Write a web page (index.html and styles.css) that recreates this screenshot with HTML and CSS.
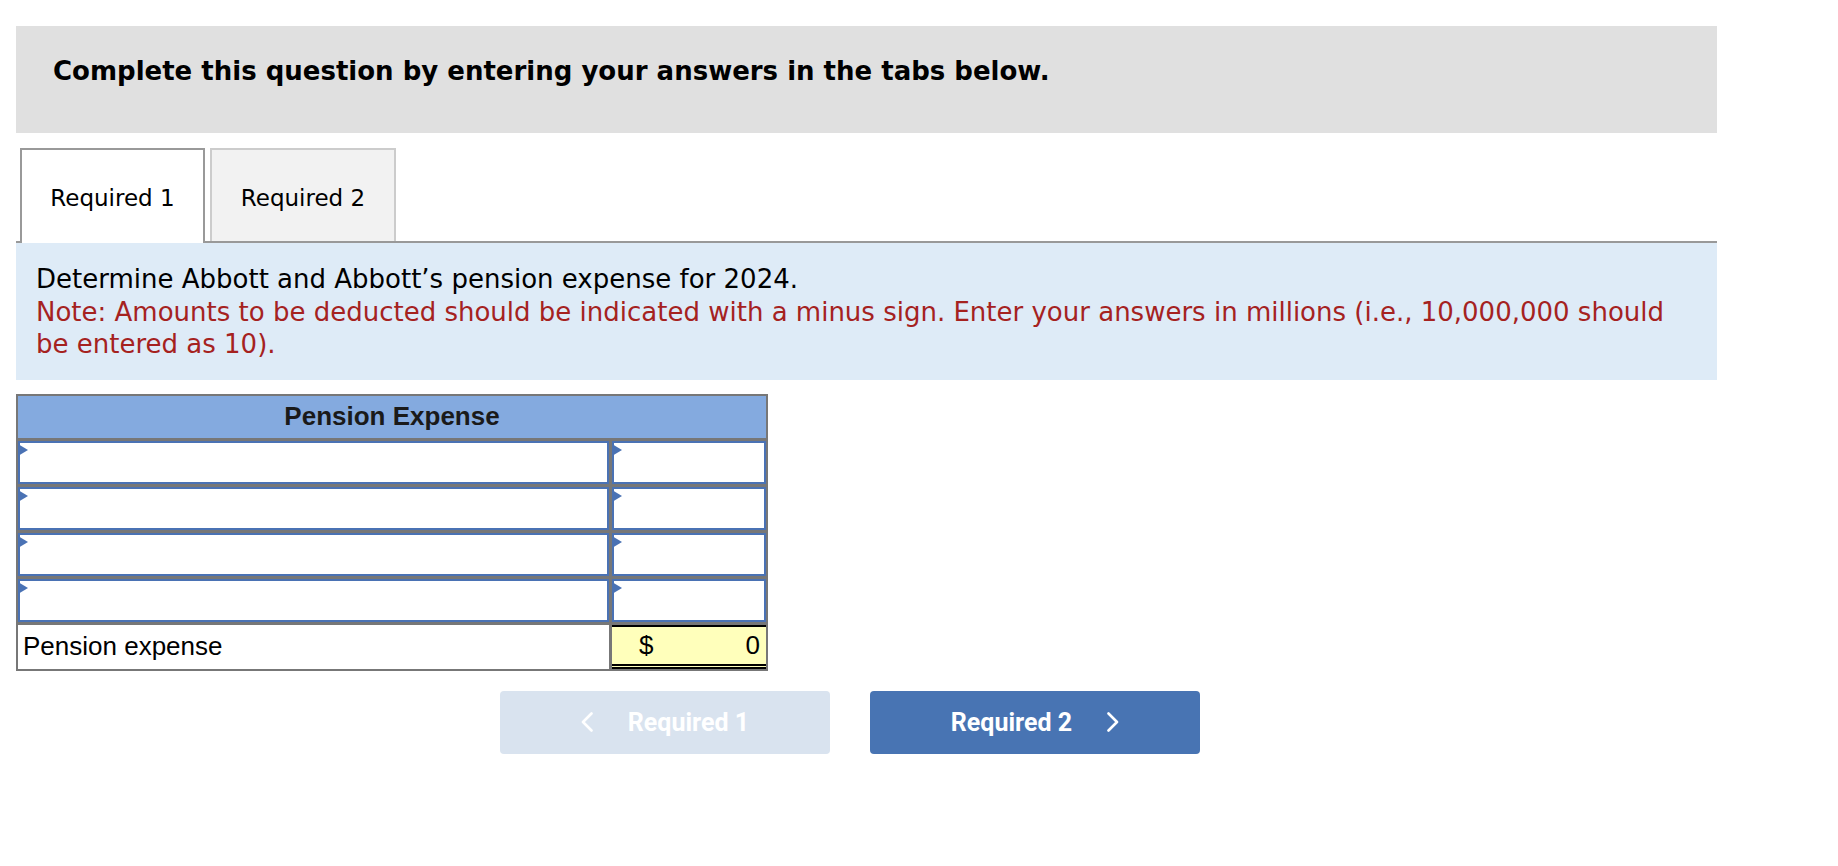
FILE: index.html
```html
<!DOCTYPE html>
<html lang="en">
<head>
<meta charset="utf-8">
<title>Pension Expense</title>
<link rel="stylesheet" href="styles.css">
</head>
<body>
<div class="page">
  <div class="banner">Complete this question by entering your answers in the tabs below.</div>

  <div class="tabs">
    <div class="tab tab-active">Required 1</div>
    <div class="tab tab-idle">Required 2</div>
  </div>

  <div class="instructions">
    <div class="instr-main">Determine Abbott and Abbott’s pension expense for 2024.</div>
    <div class="instr-note">Note: Amounts to be deducted should be indicated with a minus sign. Enter your answers in millions (i.e., 10,000,000 should be entered as 10).</div>
  </div>

  <div class="tbl">
    <div class="tbl-head">Pension Expense</div>
    <div class="tbl-body">
      <div class="inp"></div><div class="inp"></div>
      <div class="inp"></div><div class="inp"></div>
      <div class="inp"></div><div class="inp"></div>
      <div class="inp"></div><div class="inp"></div>
      <div class="total-label">Pension expense</div>
      <div class="total-val"><span>$</span><span>0</span></div>
    </div>
  </div>

  <div class="nav">
    <div class="btn btn-prev">
      <svg class="chev" width="12" height="20" viewBox="0 0 12 20"><polyline points="10.5,1.5 2,10 10.5,18.5" fill="none" stroke="#fff" stroke-width="2.6" stroke-linecap="round" stroke-linejoin="round"/></svg>
      <span>Required 1</span>
    </div>
    <div class="btn btn-next">
      <span>Required 2</span>
      <svg class="chev" width="12" height="20" viewBox="0 0 12 20"><polyline points="1.5,1.5 10,10 1.5,18.5" fill="none" stroke="#fff" stroke-width="2.6" stroke-linecap="round" stroke-linejoin="round"/></svg>
    </div>
  </div>
</div>
</body>
</html>
```

FILE: styles.css
```css
html, body {
  margin: 0;
  padding: 0;
  background: #fff;
}

.page {
  padding: 26px 0 0 16px;
  width: 1701px;
}

.banner {
  box-sizing: border-box;
  height: 107px;
  background: #e0e0e0;
  padding: 30px 0 0 37px;
  font-family: "DejaVu Sans", Verdana, sans-serif;
  font-weight: bold;
  font-size: 26px;
  line-height: 30px;
  color: #000;
}

.tabs {
  display: flex;
  gap: 5px;
  margin-top: 15px;
  padding-left: 4px;
  height: 93px;
  border-bottom: 2px solid #999;
}

.tab {
  box-sizing: border-box;
  width: 185px;
  display: flex;
  align-items: flex-start;
  justify-content: center;
  padding-top: 33px;
  font-family: "DejaVu Sans", Verdana, sans-serif;
  font-size: 23px;
  line-height: 30px;
  color: #000;
}

.tab-active {
  height: 95px;
  background: #fff;
  border: 2px solid #999;
  border-bottom: none;
}

.tab-idle {
  width: 186px;
  height: 93px;
  background: #f2f2f2;
  border: 2px solid #ccc;
  border-bottom: none;
}

.instructions {
  background: #deebf7;
  padding: 20px 20px 19px 20px;
  font-family: "DejaVu Sans", Verdana, sans-serif;
  font-size: 26px;
  line-height: 32.5px;
}

.instr-main {
  color: #000;
}

.instr-note {
  color: #a5221f;
}

.tbl {
  box-sizing: border-box;
  width: 752px;
  margin-top: 14px;
  border: 2px solid #777;
  font-family: "Liberation Sans", Arial, sans-serif;
}

.tbl-head {
  height: 42px;
  background: #84aadf;
  border-bottom: 2px solid #777;
  display: flex;
  align-items: center;
  justify-content: center;
  font-weight: bold;
  font-size: 26px;
  color: #1a1a1a;
}

.tbl-body {
  display: grid;
  grid-template-columns: 591px 154px;
  grid-template-rows: repeat(4, 43px) 44px;
  gap: 3px;
  padding-top: 1px;
  background: #777;
}

.inp {
  position: relative;
  background: #fff;
  border: 2px solid #4a72b4;
}

.inp::before {
  content: "";
  position: absolute;
  left: -2px;
  top: 1px;
  border-left: 10px solid #4a72b4;
  border-top: 6px solid transparent;
  border-bottom: 6px solid transparent;
}

.total-label {
  background: #fff;
  display: flex;
  align-items: center;
  padding-left: 5px;
  font-size: 26px;
  color: #000;
}

.total-val {
  box-sizing: border-box;
  background: #ffffbb;
  border-top: 2px solid #000;
  border-bottom: 5px double #000;
  display: flex;
  align-items: center;
  justify-content: space-between;
  padding: 0 6px 0 27px;
  font-size: 26px;
  color: #000;
}

.nav {
  display: flex;
  gap: 40px;
  margin: 20px 0 0 484px;
}

.btn {
  box-sizing: border-box;
  width: 330px;
  height: 63px;
  border-radius: 4px;
  display: flex;
  align-items: center;
  justify-content: center;
  gap: 35px;
  font-family: Roboto, "Liberation Sans", sans-serif;
  font-weight: bold;
  font-size: 25px;
  color: #fff;
}

.btn-prev {
  background: #d9e3ef;
}

.btn-next {
  background: #4874b3;
}

.chev {
  display: block;
}
```
